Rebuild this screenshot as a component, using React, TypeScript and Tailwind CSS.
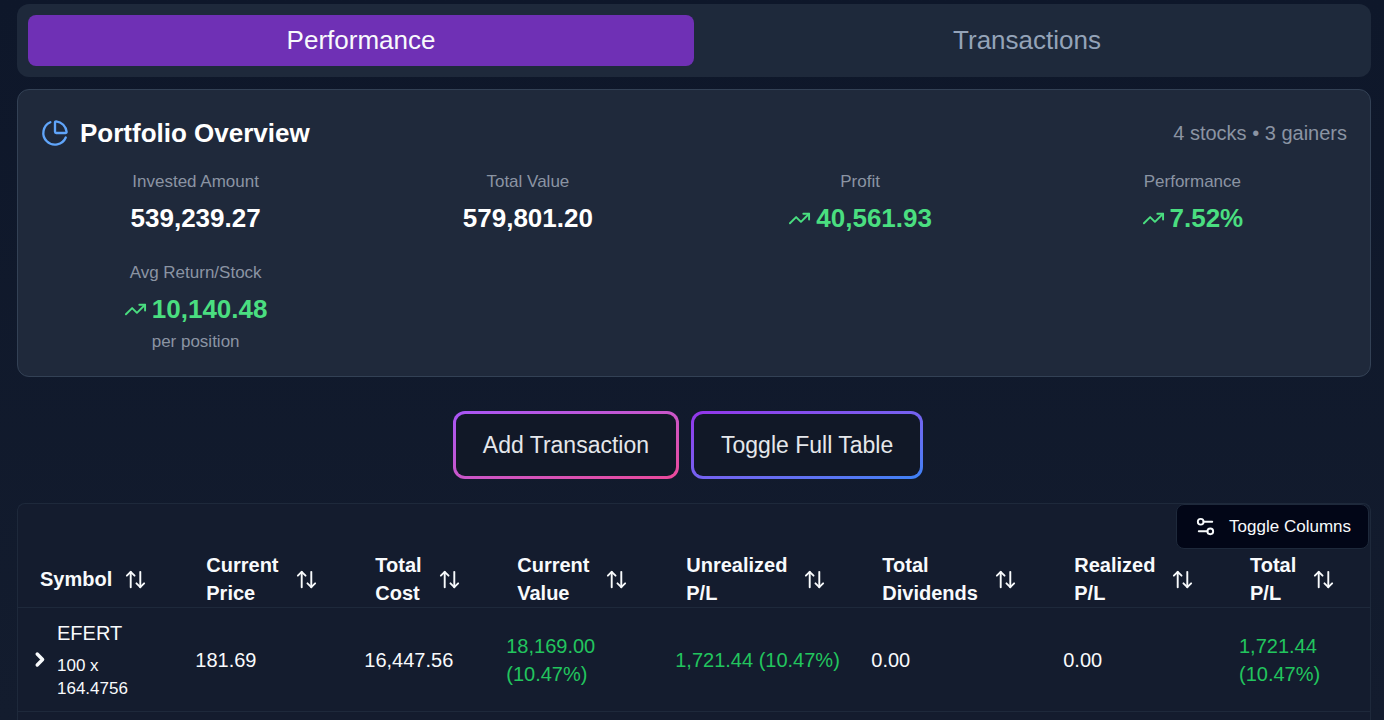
import {useState} from 'react';
import {ArrowUpDown, ChartPie, Settings2, TrendingUp} from 'lucide-react';
import clsx from 'clsx';

type Stat = {
  label: string;
  value: string;
  gain?: boolean;
  note?: string;
};

type Column = {
  label: string;
  width: string;
};

const tabs: string[] = ['Performance', 'Transactions'];

const stats: Stat[] = [
  {label: 'Invested Amount', value: '539,239.27'},
  {label: 'Total Value', value: '579,801.20'},
  {label: 'Profit', value: '40,561.93', gain: true},
  {label: 'Performance', value: '7.52%', gain: true},
  {
    label: 'Avg Return/Stock',
    value: '10,140.48',
    gain: true,
    note: 'per position',
  },
];

const columns: Column[] = [
  {label: 'Current Price', width: 'w-[12.5%]'},
  {label: 'Total Cost', width: 'w-[10.5%]'},
  {label: 'Current Value', width: 'w-[12.5%]'},
  {label: 'Unrealized P/L', width: 'w-[14.5%]'},
  {label: 'Total Dividends', width: 'w-[14.2%]'},
  {label: 'Realized P/L', width: 'w-[13%]'},
  {label: 'Total P/L', width: 'w-[10.5%]'},
];

const cells: {text: string; gain?: boolean}[] = [
  {text: '181.69'},
  {text: '16,447.56'},
  {text: '18,169.00 (10.47%)', gain: true},
  {text: '1,721.44 (10.47%)', gain: true},
  {text: '0.00'},
  {text: '0.00'},
  {text: '1,721.44 (10.47%)', gain: true},
];

const Tabs = () => {
  const [active, setActive] = useState('Performance');
  return (
    <div role="tablist" className="flex rounded-xl bg-[#1e293b] p-[11px]">
      {tabs.map((tab) => (
        <button
          key={tab}
          type="button"
          role="tab"
          aria-selected={active === tab}
          onClick={() => setActive(tab)}
          className={clsx(
            'h-[51px] flex-1 rounded-lg text-[26px]',
            active === tab ? 'bg-[#6f30b5] text-slate-50' : 'text-[#94a3b8]',
          )}
        >
          {tab}
        </button>
      ))}
    </div>
  );
};

const StatItem = ({label, value, gain, note}: Stat) => (
  <div className="text-center">
    <div className="mb-[5px] text-[17px] leading-[23px] text-[#8b94a3]">
      {label}
    </div>
    <div
      className={clsx(
        'flex items-center justify-center gap-[5px] text-[26px] leading-10 font-bold',
        gain ? 'text-[#4ade80]' : 'text-white',
      )}
    >
      {gain && <TrendingUp size={23} />}
      {value}
    </div>
    {note && (
      <div className="mt-px text-[17px] leading-[23px] text-[#8b94a3]">
        {note}
      </div>
    )}
  </div>
);

const Overview = () => (
  <section className="mt-3 rounded-xl border border-[#334155] bg-[#1f293b] p-[23px]">
    <div className="mb-[17px] flex items-center justify-between">
      <h2 className="flex items-center gap-[11px] text-[26px] leading-10 font-bold text-white">
        <ChartPie size={28} className="text-[#60a5fa]" />
        Portfolio Overview
      </h2>
      <span className="text-xl text-[#8b94a3]">4 stocks • 3 gainers</span>
    </div>
    <div className="grid grid-cols-4 gap-[23px]">
      {stats.map((stat) => (
        <StatItem key={stat.label} {...stat} />
      ))}
    </div>
  </section>
);

const GradientButton = ({
  label,
  gradient,
}: {
  label: string;
  gradient: string;
}) => (
  <button
    type="button"
    className={clsx('mr-3 rounded-xl bg-linear-to-br p-[3px]', gradient)}
  >
    <span className="block rounded-[9px] bg-[#111827] px-[27px] py-[15px] text-[23px] leading-8 text-[#e5e7eb]">
      {label}
    </span>
  </button>
);

const SortButton = ({label}: {label: string}) => (
  <button
    type="button"
    className="flex items-center gap-4 text-left leading-7 font-bold"
  >
    <span className="w-min">{label}</span>
    <ArrowUpDown size={23} className="shrink-0" />
  </button>
);

const ExpandIcon = () => (
  <svg width="17" height="17" viewBox="0 0 17 17" fill="none">
    <path
      d="M4.2 3 9.6 8.5 4.2 14"
      stroke="currentColor"
      strokeWidth="3.4"
      strokeLinecap="round"
      strokeLinejoin="round"
    />
  </svg>
);

const HoldingsTable = () => (
  <section className="mt-6 flex-1 rounded-t-lg border border-b-0 border-[#1e293b] bg-[#141c2e]">
    <div className="flex justify-end pr-px">
      <button
        type="button"
        className="flex h-[45px] items-center gap-3 rounded-lg border border-[#1e293b] bg-[#020617] px-[17px] text-[17px] text-slate-50"
      >
        <Settings2 size={23} />
        Toggle Columns
      </button>
    </div>
    <table className="mt-0.5 w-full table-fixed text-xl text-slate-50">
      <thead>
        <tr className="border-b border-[#1e293b]">
          <th className="w-[12.3%] pl-[22px] text-left">
            <button
              type="button"
              className="flex items-center gap-3 leading-7 font-bold"
            >
              Symbol
              <ArrowUpDown size={23} />
            </button>
          </th>
          {columns.map((column) => (
            <th key={column.label} className={clsx('pl-[22px]', column.width)}>
              <SortButton label={column.label} />
            </th>
          ))}
        </tr>
      </thead>
      <tbody>
        <tr className="border-b border-[#1e293b]">
          <td className="py-[11px] pl-[15px]">
            <div className="flex items-center gap-[7px]">
              <button type="button" aria-label="Expand EFERT">
                <ExpandIcon />
              </button>
              <div>
                <div className="leading-7">EFERT</div>
                <div className="mt-[7px] w-24 text-[17px] leading-[23px]">
                  100 x 164.4756
                </div>
              </div>
            </div>
          </td>
          {cells.map((cell, index) => (
            <td
              key={index}
              className={clsx(
                'px-[11px] leading-7',
                cell.gain && 'text-[#22c55e]',
              )}
            >
              {cell.text}
            </td>
          ))}
        </tr>
      </tbody>
    </table>
  </section>
);

const App = () => {
  return (
    <main className="flex min-h-screen flex-col bg-linear-to-b from-[#0e172a] to-[#131c2e] pt-1 pr-[13px] pl-[17px] font-['Liberation_Sans',Arial,sans-serif]">
      <Tabs />
      <Overview />
      <div className="mt-[34px] flex justify-center">
        <GradientButton
          label="Add Transaction"
          gradient="from-[#a855f7] to-[#ec4899]"
        />
        <GradientButton
          label="Toggle Full Table"
          gradient="from-[#9333ea] to-[#3b82f6]"
        />
      </div>
      <HoldingsTable />
    </main>
  );
};

export default App;
